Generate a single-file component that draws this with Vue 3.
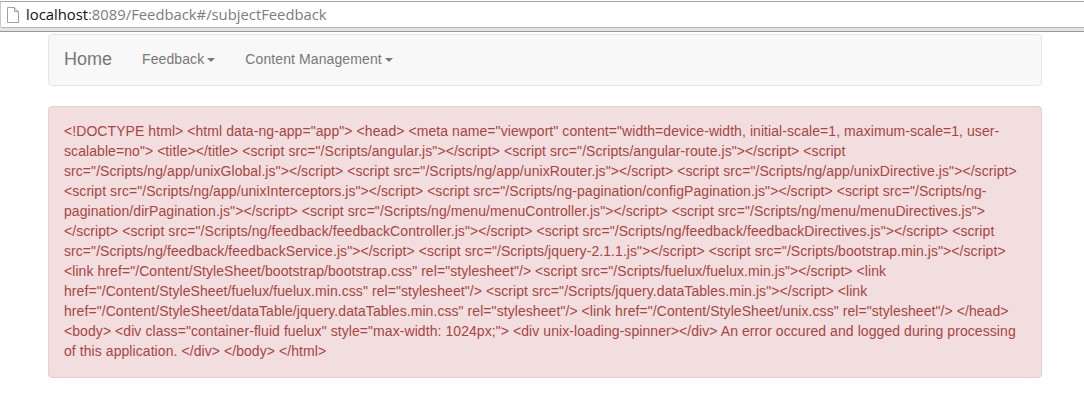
<script setup>
const url = { host: 'localhost', rest: ':8089/Feedback#/subjectFeedback' }
const navItems = ['Feedback', 'Content Management']
const message = `<!DOCTYPE html> <html data-ng-app="app"> <head> <meta name="viewport" content="width=device-width, initial-scale=1, maximum-scale=1, user-scalable=no"> <title></title> <script src="/Scripts/angular.js"><\/script> <script src="/Scripts/angular-route.js"><\/script> <script src="/Scripts/ng/app/unixGlobal.js"><\/script> <script src="/Scripts/ng/app/unixRouter.js"><\/script> <script src="/Scripts/ng/app/unixDirective.js"><\/script> <script src="/Scripts/ng/app/unixInterceptors.js"><\/script> <script src="/Scripts/ng-pagination/configPagination.js"><\/script> <script src="/Scripts/ng-pagination/dirPagination.js"><\/script> <script src="/Scripts/ng/menu/menuController.js"><\/script> <script src="/Scripts/ng/menu/menuDirectives.js"><\/script> <script src="/Scripts/ng/feedback/feedbackController.js"><\/script> <script src="/Scripts/ng/feedback/feedbackDirectives.js"><\/script> <script src="/Scripts/ng/feedback/feedbackService.js"><\/script> <script src="/Scripts/jquery-2.1.1.js"><\/script> <script src="/Scripts/bootstrap.min.js"><\/script> <link href="/Content/StyleSheet/bootstrap/bootstrap.css" rel="stylesheet"/> <script src="/Scripts/fuelux/fuelux.min.js"><\/script> <link href="/Content/StyleSheet/fuelux/fuelux.min.css" rel="stylesheet"/> <script src="/Scripts/jquery.dataTables.min.js"><\/script> <link href="/Content/StyleSheet/dataTable/jquery.dataTables.min.css" rel="stylesheet"/> <link href="/Content/StyleSheet/unix.css" rel="stylesheet"/> </head> <body> <div class="container-fluid fuelux" style="max-width: 1024px;"> <div unix-loading-spinner></div> An error occured and logged during processing of this application. </div> </body> </html>`
</script>

<template>
  <div class="page">
    <header class="chrome">
      <div class="address">
        <svg class="doc" width="14" height="16" viewBox="0 0 14 16">
          <path d="M1.5 .5h7l4 4v11h-11z" fill="#fff" stroke="#a0a0a0" />
          <path d="M8.5 .5v4h4" fill="#e4e4e4" stroke="#a0a0a0" />
        </svg>
        <span class="url"><span class="host">{{ url.host }}</span>{{ url.rest }}</span>
      </div>
      <div class="chrome-edge"></div>
    </header>
    <main class="container">
      <nav class="navbar">
        <a class="brand">Home</a>
        <a v-for="item in navItems" :key="item" class="nav-link">{{ item }}<span class="caret"></span></a>
      </nav>
      <div class="alert">{{ message }}</div>
    </main>
  </div>
</template>

<style scoped>
.page {
  width: 1084px;
  height: 403px;
  overflow: hidden;
  background: #fff;
  font-family: "Liberation Sans", Arial, sans-serif;
  font-size: 14px;
  line-height: 20px;
  letter-spacing: 0.1px;
}
.chrome {
  height: 33px;
}
.address {
  height: 27px;
  margin-top: 1px;
  border-top: 1px solid #a3a3a3;
  border-bottom: 1px solid #b5b5b5;
  border-left: 1px solid #c8c8c8;
  border-bottom-left-radius: 2px;
  box-sizing: border-box;
  display: flex;
  align-items: center;
  padding-left: 5px;
}
.doc {
  flex: none;
}
.url {
  margin-left: 6px;
  font-family: "Open Sans", "Liberation Sans", sans-serif;
  font-size: 14.8px;
  letter-spacing: 0;
  color: #7c7c7c;
  white-space: nowrap;
  position: relative;
  top: -1px;
}
.host {
  color: #111;
}
.chrome-edge {
  height: 4px;
  background: #e2e2e2;
  border-bottom: 1px solid #9a9a9a;
  box-sizing: border-box;
}
.container {
  width: 994px;
  margin-left: 48px;
}
.navbar {
  height: 52px;
  box-sizing: border-box;
  background: #f8f8f8;
  border: 1px solid #e7e7e7;
  border-radius: 4px;
  display: flex;
  align-items: center;
  padding-left: 15px;
  padding-bottom: 2px;
}
.brand {
  font-size: 18px;
  letter-spacing: 0;
  color: #777;
  margin-right: 30px;
}
.nav-link {
  color: #777;
  margin-right: 30px;
}
.caret {
  display: inline-block;
  width: 0;
  height: 0;
  margin-left: 3px;
  vertical-align: middle;
  border-top: 4px solid #777;
  border-left: 4px solid transparent;
  border-right: 4px solid transparent;
}
.alert {
  margin-top: 20px;
  padding: 14px 15px 16px;
  background: #f2dede;
  border: 1px solid #ebccd1;
  border-radius: 4px;
  color: #a94442;
  letter-spacing: 0.07px;
  box-sizing: border-box;
}
</style>
